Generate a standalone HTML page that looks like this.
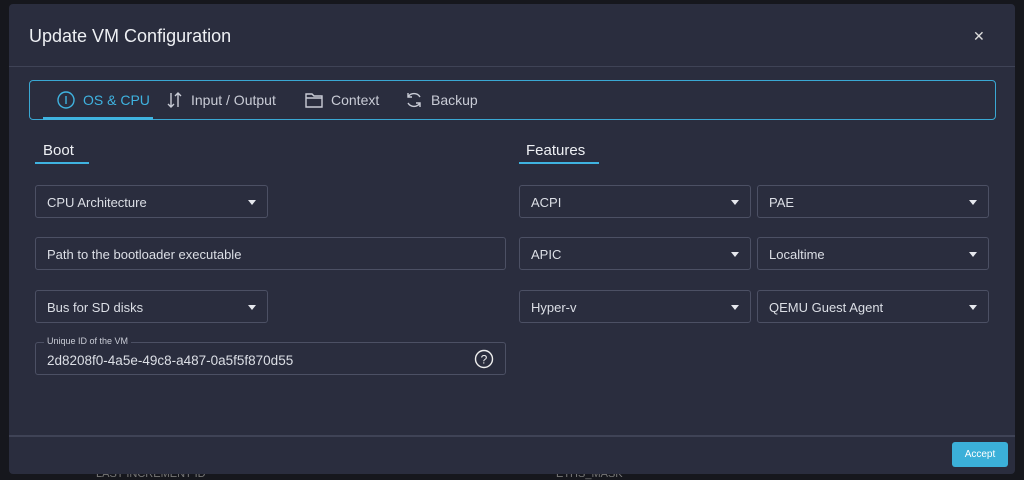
<!DOCTYPE html>
<html><head><style>
*{box-sizing:border-box;margin:0;padding:0}
body{width:1024px;height:478px;background:#16171d;font-family:"Liberation Sans",sans-serif;color:#e6e8ee;position:relative;overflow:hidden}
.bgtext{position:absolute;top:468px;font-size:11px;color:#777}
.modal{position:absolute;left:9px;top:4px;width:1006px;height:470px;background:#2a2d3e;border-radius:4px}
.title{position:absolute;left:20px;top:22px;font-size:18px;color:#eef0f4}
.close{position:absolute;left:964px;top:24px;font-size:14px;color:#ddd}
.hr{position:absolute;left:0;width:1006px;height:1px;background:#3f4356}
.tabs{position:absolute;left:20px;top:76px;width:967px;height:40px;border:1px solid #3aa8d3;border-radius:4px}
.tab{position:absolute;top:10px;font-size:14px;color:#c9ccd6;display:flex;align-items:center;gap:8px}
.tab svg{stroke:#c9ccd6;fill:none;stroke-width:1.4}
.tab.act{color:#3fb3e0}.tab.act svg{stroke:#3fb3e0}
.ul{position:absolute;height:3px;background:#3fb3e0}
.sec{position:absolute;font-size:15px;color:#eef0f4}
.field{position:absolute;height:33px;border:1px solid #4c5064;border-radius:3px;font-size:13px;color:#dcdfe6;padding:9px 11px}
.arrow{position:absolute;right:11px;top:14px;width:0;height:0;border-left:4px solid transparent;border-right:4px solid transparent;border-top:5px solid #e6e8ee}
.legend{position:absolute;left:8px;top:-7px;font-size:9px;background:#2a2d3e;padding:0 3px;color:#c9ccd6}
.btn{position:absolute;left:952px;top:442px;width:56px;height:25px;background:#3bb0d9;border-radius:3px;font-size:10px;color:#fff;display:flex;align-items:center;justify-content:center}
</style></head><body>
<div class="bgtext" style="left:96px">LAST INCREMENT ID</div>
<div class="bgtext" style="left:556px">ETHS_MASK</div>
<div class="modal">
<div class="title">Update VM Configuration</div>
<div class="close">✕</div>
<div class="hr" style="top:62px"></div>
<div class="tabs">
 <div class="tab act" style="left:27px"><svg width="18" height="18"><circle cx="9" cy="9" r="8"/><line x1="9" y1="5" x2="9" y2="13"/></svg>OS &amp; CPU</div>
 <div class="tab" style="left:137px"><svg width="16" height="18"><path d="M4 2v14M1 13l3 3 3-3M11 16V2M8 5l3-3 3 3"/></svg>Input / Output</div>
 <div class="tab" style="left:275px"><svg width="18" height="18"><path d="M1 3h6l2 2h8v11H1z M1 7h16"/></svg>Context</div>
 <div class="tab" style="left:375px"><svg width="18" height="18"><path d="M15 6A7 7 0 0 0 3 6M3 2v4h4M3 12a7 7 0 0 0 12 0M15 16v-4h-4"/></svg>Backup</div>
 <div class="ul" style="left:13px;top:36px;width:110px"></div>
</div>
<div class="sec" style="left:34px;top:138px">Boot</div>
<div class="ul" style="left:26px;top:158px;width:54px;height:2px"></div>
<div class="sec" style="left:517px;top:138px">Features</div>
<div class="ul" style="left:510px;top:158px;width:80px;height:2px"></div>

<div class="field" style="left:26px;top:181px;width:233px">CPU Architecture<i class="arrow"></i></div>
<div class="field" style="left:26px;top:233px;width:471px">Path to the bootloader executable</div>
<div class="field" style="left:26px;top:286px;width:233px">Bus for SD disks<i class="arrow"></i></div>
<div class="field" style="left:26px;top:338px;width:471px;font-size:13.5px;padding-top:10px"><span class="legend">Unique ID of the VM</span>2d8208f0-4a5e-49c8-a487-0a5f5f870d55
 <svg style="position:absolute;right:11px;top:6px" width="20" height="20"><circle cx="10" cy="10" r="8.5" stroke="#eee" fill="none" stroke-width="1.4"/><text x="10" y="14.5" font-size="12" fill="#eee" text-anchor="middle" font-family="Liberation Sans">?</text></svg></div>

<div class="field" style="left:510px;top:181px;width:232px">ACPI<i class="arrow"></i></div>
<div class="field" style="left:748px;top:181px;width:232px">PAE<i class="arrow"></i></div>
<div class="field" style="left:510px;top:233px;width:232px">APIC<i class="arrow"></i></div>
<div class="field" style="left:748px;top:233px;width:232px">Localtime<i class="arrow"></i></div>
<div class="field" style="left:510px;top:286px;width:232px">Hyper-v<i class="arrow"></i></div>
<div class="field" style="left:748px;top:286px;width:232px">QEMU Guest Agent<i class="arrow"></i></div>

<div class="hr" style="top:431px;height:2px"></div>
</div>
<div class="btn">Accept</div>
</body></html>
